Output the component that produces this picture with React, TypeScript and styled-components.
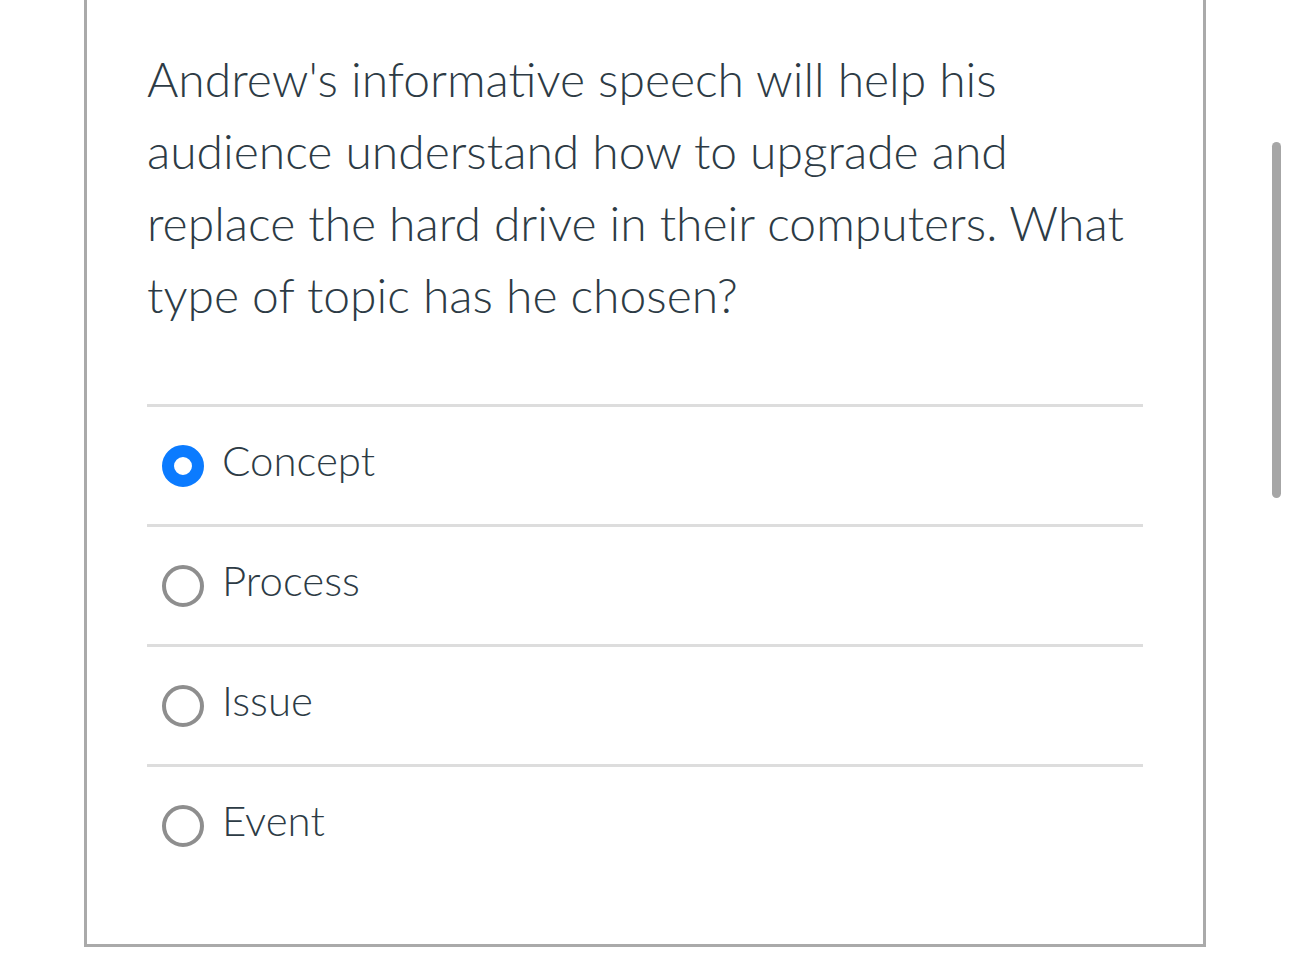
import React from 'react';
import styled, { createGlobalStyle } from 'styled-components';

const GlobalStyle = createGlobalStyle`
  html, body {
    margin: 0;
    padding: 0;
    background: #ffffff;
  }
  body {
    font-family: Lato, "Open Sans", sans-serif;
    color: #2d3b45;
  }
`;

const Page = styled.div`
  width: 1290px;
  height: 976px;
  position: relative;
  overflow: hidden;
`;

const Card = styled.div`
  margin-left: 84px;
  width: 1122px;
  box-sizing: border-box;
  border: 3px solid #aaaaaa;
  border-top: none;
  padding: 43px 60px 60px;
`;

const Question = styled.p`
  margin: 0 0 73px;
  font-size: 48px;
  line-height: 72px;
  font-weight: 300;
  color: #2d3b45;
`;

const Options = styled.div`
  display: flex;
  flex-direction: column;
`;

const Option = styled.label`
  display: flex;
  align-items: center;
  height: 117px;
  border-top: 3px solid #dddddd;
  padding-left: 15px;
  gap: 18px;
  cursor: pointer;
`;

const Radio = styled.span<{ $checked?: boolean }>`
  width: 42px;
  height: 42px;
  box-sizing: border-box;
  border-radius: 50%;
  flex: none;
  border: ${(p) => (p.$checked ? '12px solid #0b7bff' : '4px solid #8e8e8e')};
  background: #ffffff;
`;

const OptionText = styled.span`
  font-size: 42px;
  font-weight: 300;
  line-height: 50px;
  color: #2d3b45;
  margin-top: -12px;
`;

const ScrollThumb = styled.div`
  position: absolute;
  left: 1272px;
  top: 142px;
  width: 9px;
  height: 356px;
  border-radius: 5px;
  background: #a6a6a6;
`;

const choices = ['Concept', 'Process', 'Issue', 'Event'];

const App: React.FC = () => {
  return (
    <Page>
      <GlobalStyle />
      <Card>
        <Question>
          Andrew's informative speech will help his audience understand how to upgrade and
          replace the hard drive in their computers. What type of topic has he chosen?
        </Question>
        <Options>
          {choices.map((c, i) => (
            <Option key={c}>
              <Radio $checked={i === 0} />
              <OptionText>{c}</OptionText>
            </Option>
          ))}
        </Options>
      </Card>
      <ScrollThumb />
    </Page>
  );
};

export default App;
